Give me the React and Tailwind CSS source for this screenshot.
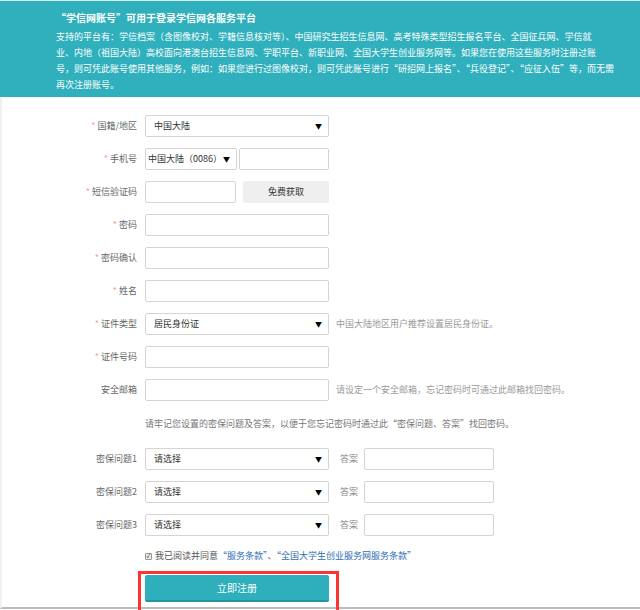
const font = { fontFamily: '"Noto Sans CJK SC", "Noto Sans", sans-serif' };

const Label = ({ text, required }) => (
  <div className="w-[135px] shrink-0 text-right text-[9px] text-[#666] leading-[22px]">
    {required && <span className="text-[#f4a0a0] mr-[2px]">*</span>}
    {text}
  </div>
);

const Select = ({ value, className = "", textClass = "pl-[8px]" }) => (
  <div
    className={`h-[22px] border border-[#d4d4d4] rounded-[2px] bg-white flex items-center justify-between ${className}`}
  >
    <span className={`text-[9px] text-[#333] ${textClass}`}>{value}</span>
    <span className="text-[7px] text-black pr-[6px]">▼</span>
  </div>
);

const Input = ({ className = "" }) => (
  <div className={`h-[22px] border border-[#d4d4d4] rounded-[2px] bg-white ${className}`} />
);

const Row = ({ label, required, children, className = "" }) => (
  <div className={`flex items-center h-[22px] ${className}`}>
    <Label text={label} required={required} />
    <div className="ml-[8px] flex items-center">{children}</div>
  </div>
);

const Hint = ({ children }) => (
  <span className="ml-[7px] text-[9px] text-[#9a9a9a] whitespace-nowrap">{children}</span>
);

const QuestionRow = ({ n, className = "" }) => (
  <Row label={`密保问题${n}`} className={className}>
    <Select value="请选择" className="w-[184px]" />
    <span className="ml-[11px] text-[9px] text-[#888]">答案</span>
    <Input className="ml-[6px] w-[130px]" />
  </Row>
);

export default function App() {
  return (
    <div className="w-[640px] h-[610px] overflow-hidden bg-white relative" style={font}>
      <div className="bg-[#2fb0bc] border-t border-[#d6eef0] h-[97px] pl-[56px] pt-[10px] text-white">
        <div className="text-[10px] font-semibold leading-[14px]">“学信网账号”可用于登录学信网各服务平台</div>
        <div className="mt-[4px] text-[9px] leading-[16px] whitespace-nowrap">
          <div>支持的平台有：学信档案（含图像校对、学籍信息核对等）、中国研究生招生信息网、高考特殊类型招生报名平台、全国征兵网、学信就</div>
          <div>业、内地（祖国大陆）高校面向港澳台招生信息网、学职平台、新职业网、全国大学生创业服务网等。如果您在使用这些服务时注册过账</div>
          <div>号，则可凭此账号使用其他服务，例如：如果您进行过图像校对，则可凭此账号进行“研招网上报名”、“兵役登记”、“应征入伍”等，而无需</div>
          <div>再次注册账号。</div>
        </div>
      </div>

      <div className="h-[512px] border-l-2 border-[#f0f0f0] border-b-2 border-b-[#bbbbbb] pt-[18px] flex flex-col">
        <Row label="国籍/地区" required>
          <Select value="中国大陆" className="w-[184px]" />
        </Row>
        <Row label="手机号" required className="mt-[11px]">
          <Select value="中国大陆（0086）" className="w-[92px]" textClass="pl-[2px]" />
          <Input className="ml-[2px] w-[90px]" />
        </Row>
        <Row label="短信验证码" required className="mt-[11px]">
          <Input className="w-[91px]" />
          <div className="ml-[7px] w-[86px] h-[22px] bg-[#efefef] rounded-[2px] flex items-center justify-center text-[9px] text-[#333]">
            免费获取
          </div>
        </Row>
        <Row label="密码" required className="mt-[11px]">
          <Input className="w-[184px]" />
        </Row>
        <Row label="密码确认" required className="mt-[11px]">
          <Input className="w-[184px]" />
        </Row>
        <Row label="姓名" required className="mt-[11px]">
          <Input className="w-[184px]" />
        </Row>
        <Row label="证件类型" required className="mt-[11px]">
          <Select value="居民身份证" className="w-[184px]" />
          <Hint>中国大陆地区用户推荐设置居民身份证。</Hint>
        </Row>
        <Row label="证件号码" required className="mt-[11px]">
          <Input className="w-[184px]" />
        </Row>
        <Row label="安全邮箱" className="mt-[11px]">
          <Input className="w-[184px]" />
          <Hint>请设定一个安全邮箱，忘记密码时可通过此邮箱找回密码。</Hint>
        </Row>
        <div className="mt-[12px] h-[22px] pl-[143px] flex items-center text-[9px] text-[#777] whitespace-nowrap">
          请牢记您设置的密保问题及答案，以便于您忘记密码时通过此“密保问题、答案”找回密码。
        </div>
        <QuestionRow n={1} className="mt-[13px]" />
        <QuestionRow n={2} className="mt-[11px]" />
        <QuestionRow n={3} className="mt-[11px]" />

        <div className="mt-[13px] pl-[143px] flex items-center h-[14px]">
          <span className="w-[7px] h-[7px] border border-[#999] bg-[#e8e8e8] rounded-[1px] flex items-center justify-center text-[6px] leading-none text-[#333]">✓</span>
          <span className="ml-[3px] text-[9px] text-[#555] whitespace-nowrap">
            我已阅读并同意<span className="text-[#2f6db5]">“服务条款”</span>、<span className="text-[#2f6db5]">“全国大学生创业服务网服务条款”</span>
          </span>
        </div>

        <div className="ml-[136px] mt-[8px] w-[201px] h-[45px] shrink-0 border-[3px] border-[#ff3333] pl-[4px] pt-[1px] relative z-10 -mb-[10px]">
          <div className="w-[184px] h-[27px] bg-[#2eafbb] rounded-[2px] border-b-2 border-[#2593a0] flex items-center justify-center text-[10px] text-white">
            立即注册
          </div>
        </div>
      </div>
    </div>
  );
}
